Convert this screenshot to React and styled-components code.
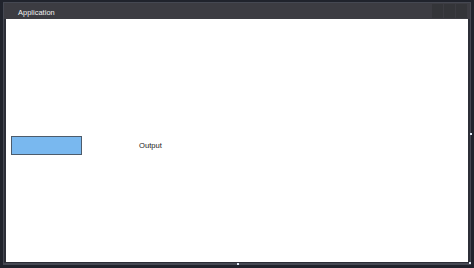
import React from "react";
import styled, { createGlobalStyle } from "styled-components";

// Couleurs de la fenêtre
const DESKTOP_BG = "#20232c";
const FRAME = "#2c2e37";
const FRAME_EDGE = "#454852";
const TITLE_BG = "#3c3c42";
const BUTTON_BG = "#343539";
const TEXT_LIGHT = "#f2f2f2";

const GlobalStyle = createGlobalStyle`
  html, body {
    margin: 0;
    padding: 0;
    width: 474px;
    height: 268px;
    overflow: hidden;
    background: ${DESKTOP_BG};
  }
  #root {
    height: 100%;
  }
`;

const Desktop = styled.div`
  box-sizing: border-box;
  height: 268px;
  padding: 2px 3px 3px 3px;
  font-family: "Liberation Sans", Arial, sans-serif;
`;

/* Fenêtre principale */
const Window = styled.div`
  position: relative;
  box-sizing: border-box;
  height: 263px;
  display: flex;
  flex-direction: column;
  background: ${FRAME};
  border-top: 1px solid ${FRAME_EDGE};
  border-left: 1px solid ${FRAME_EDGE};
  border-right: 1px solid ${FRAME_EDGE};
  border-bottom: 2px solid ${FRAME_EDGE};
  padding: 0 2px 1px 2px;
`;

const TitleBar = styled.div`
  height: 16px;
  margin: 0 -2px;
  padding: 0 3px 0 14px;
  display: flex;
  align-items: center;
  justify-content: space-between;
  background: ${TITLE_BG};
`;

const Title = styled.span`
  color: ${TEXT_LIGHT};
  font-size: 7.4px;
  letter-spacing: 0.05px;
  padding-top: 2px;
`;

const Buttons = styled.div`
  display: flex;
  gap: 1px;
  align-self: stretch;
  padding: 1px 0;
`;

const WinButton = styled.div`
  width: 11px;
  background: ${BUTTON_BG};
`;

const Content = styled.div`
  flex: 1;
  background: #ffffff;
  padding: 117px 0 0 5px;
`;

const Row = styled.div`
  display: flex;
  align-items: center;
  gap: 57px;
`;

const BlueBox = styled.div`
  box-sizing: border-box;
  width: 71px;
  height: 19px;
  background: #79b8ef;
  border: 1px solid #4d5c6c;
`;

const Label = styled.span`
  color: #1a1a1a;
  font-size: 7.6px;
`;

/* Petites poignées de redimensionnement */
const Grip = styled.div`
  position: absolute;
  width: 2px;
  height: 2px;
  background: #dfe8f5;
  ${(p) => p.$pos}
`;

const App = () => (
  <>
    <GlobalStyle />
    <Desktop>
      <Window>
        <TitleBar>
          <Title>Application</Title>
          <Buttons>
            <WinButton />
            <WinButton />
            <WinButton />
          </Buttons>
        </TitleBar>
        <Content>
          <Row>
            <BlueBox />
            <Label>Output</Label>
          </Row>
        </Content>
        <Grip $pos="right: -2px; top: 130px;" />
        <Grip $pos="left: 233px; bottom: -2px;" />
        <Grip $pos="right: -1px; bottom: -1px;" />
      </Window>
    </Desktop>
  </>
);

export default App;
